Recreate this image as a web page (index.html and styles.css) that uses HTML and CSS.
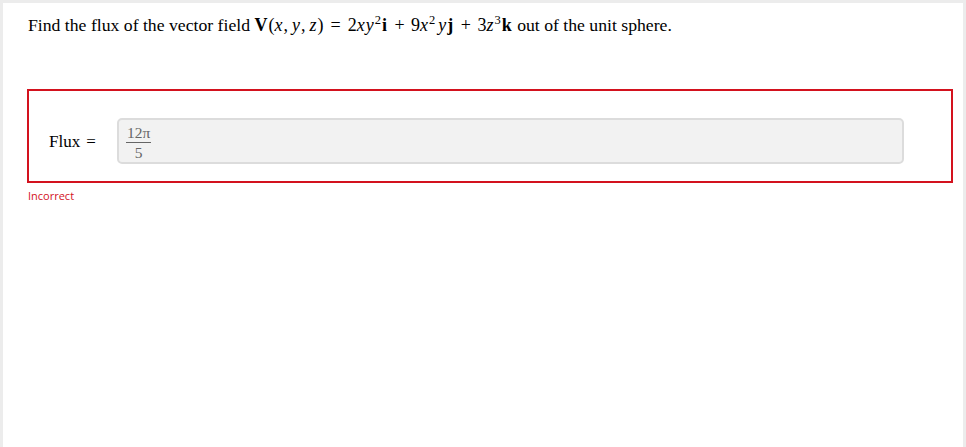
FILE: index.html
```html
<!DOCTYPE html>
<html lang="en">
<head>
  <meta charset="UTF-8" />
  <title>Flux question</title>
  <link rel="stylesheet" href="styles.css">
</head>
<body>
  <div class="pagina">
    <p class="domanda">
      Find the flux of the vector field <span class="mat"><b>V</b>(<i>x</i><span class="virgola">,</span><i>y</i><span class="virgola">,</span><i>z</i>)<span class="rel">=</span>2<i>x</i><i>y</i><sup>2</sup><b>i</b><span class="op">+</span>9<i>x</i><sup class="sp">2</sup><i>y</i><b>j</b><span class="op">+</span>3<i>z</i><sup>3</sup><b>k</b></span> out of the unit sphere.
    </p>

    <div class="riquadro-risposta">
      <span class="etichetta">Flux<span class="uguale">=</span></span>
      <div class="campo">
        <span class="frazione">
          <span class="num">12&pi;</span>
          <span class="den">5</span>
        </span>
      </div>
    </div>
    <div class="esito">Incorrect</div>
  </div>
</body>
</html>
```

FILE: styles.css
```css
html, body {
  height: 100%;
  margin: 0;
  padding: 0;
  background: #ececec;
}

.pagina {
  box-sizing: border-box;
  height: calc(100% - 3px);
  margin: 3px 3px 0 3px;
  background: #fff;
  padding: 10px 10px 0 24px;
  font-family: "Liberation Serif", "Times New Roman", serif;
  color: #000;
}

.domanda {
  margin: 0 0 0 1px;
  font-size: 17.7px;
  line-height: 24px;
}

.mat {
  font-size: 18px;
  line-height: 20px;
  white-space: nowrap;
}

.mat i {
  margin-right: 1px;
}

.mat b {
  margin-right: 1px;
}

.mat sup {
  font-size: 12.5px;
  vertical-align: 7px;
  line-height: 0;
  margin: 0 1px 0 0;
}

.mat sup.sp {
  margin-right: 3px;
}

.virgola {
  margin-right: 4px;
}

.rel {
  margin: 0 7px;
}

.op {
  margin: 0 6.5px;
}

.riquadro-risposta {
  display: flex;
  align-items: center;
  margin-top: 52px;
  box-sizing: content-box;
  border: 2px solid #d3121e;
  padding: 10px 47px 0 20px;
  height: 80px;
}

.etichetta {
  font-size: 17px;
  width: 68px;
  padding-top: 2px;
}

.uguale {
  margin-left: 6px;
}

.campo {
  flex: 1;
  box-sizing: border-box;
  height: 46px;
  background: #f2f2f2;
  border: 2px solid #dcdcdc;
  border-radius: 5px;
  padding: 4px 0 0 7px;
}

.frazione {
  display: inline-flex;
  flex-direction: column;
  align-items: center;
  color: #666;
  font-size: 15.5px;
  line-height: 13px;
}

.num {
  padding: 0 1px 3px;
  border-bottom: 1px solid #666;
}

.den {
  padding-top: 3px;
}

.esito {
  margin-top: 5px;
  padding-left: 1px;
  font-family: "Open Sans", sans-serif;
  font-size: 11px;
  color: #d3121e;
}
```
